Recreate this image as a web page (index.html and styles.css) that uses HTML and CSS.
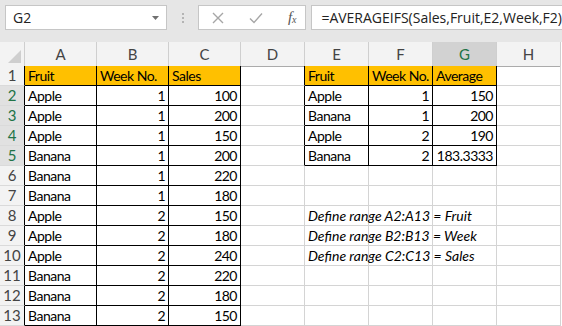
FILE: index.html
```html
<!DOCTYPE html>
<html lang="en">
<head>
    <meta charset="UTF-8">
    <meta name="viewport" content="width=device-width, initial-scale=1.0">
    <title>AVERAGEIFS</title>
    <link rel="stylesheet" href="styles.css">
</head>
<body>
    <div class="formula-bar">
        <div class="name-box">
            <span>G2</span>
            <svg class="drop" width="7" height="4" viewBox="0 0 7 4"><path d="M0 0h7L3.5 4z" fill="#707070"/></svg>
        </div>
        <div class="grip"><i></i><i></i><i></i></div>
        <div class="fx-box">
            <svg width="12" height="12" viewBox="0 0 12 12"><path d="M1 1l10 10M11 1L1 11" stroke="#a6a6a6" stroke-width="1.4" fill="none"/></svg>
            <svg width="14" height="12" viewBox="0 0 14 12"><path d="M1 6.5l4 4L13 1.5" stroke="#a6a6a6" stroke-width="1.4" fill="none"/></svg>
            <span class="fx">f<sub>x</sub></span>
        </div>
        <div class="formula-input">=AVERAGEIFS(Sales,Fruit,E2,Week,F2)</div>
    </div>

    <div class="sheet">
        <div class="row col-heads">
            <div class="corner"><svg width="13" height="13" viewBox="0 0 13 13"><path d="M13 0V13H0z" fill="#cfcfcf"/></svg></div>
            <div>A</div><div>B</div><div>C</div><div>D</div><div>E</div><div>F</div><div class="sel">G</div><div>H</div>
        </div>
        <div class="row">
            <div class="rh">1</div>
            <div class="c b hd">Fruit</div><div class="c b hd">Week No.</div><div class="c b hd">Sales</div>
            <div class="c bd"></div>
            <div class="c b hd">Fruit</div><div class="c b hd">Week No.</div><div class="c b hd">Average</div>
            <div class="c"></div>
        </div>
        <div class="row">
            <div class="rh on">2</div>
            <div class="c b">Apple</div><div class="c b n">1</div><div class="c b n">100</div>
            <div class="c bd"></div>
            <div class="c b">Apple</div><div class="c b n">1</div><div class="c b n">150</div>
            <div class="c"></div>
        </div>
        <div class="row">
            <div class="rh on">3</div>
            <div class="c b">Apple</div><div class="c b n">1</div><div class="c b n">200</div>
            <div class="c bd"></div>
            <div class="c b">Banana</div><div class="c b n">1</div><div class="c b n">200</div>
            <div class="c"></div>
        </div>
        <div class="row">
            <div class="rh on">4</div>
            <div class="c b">Apple</div><div class="c b n">1</div><div class="c b n">150</div>
            <div class="c bd"></div>
            <div class="c b">Apple</div><div class="c b n">2</div><div class="c b n">190</div>
            <div class="c"></div>
        </div>
        <div class="row">
            <div class="rh on">5</div>
            <div class="c b">Banana</div><div class="c b n">1</div><div class="c b n">200</div>
            <div class="c bd"></div>
            <div class="c b">Banana</div><div class="c b n">2</div><div class="c b n">183.3333</div>
            <div class="c"></div>
        </div>
        <div class="row">
            <div class="rh">6</div>
            <div class="c b">Banana</div><div class="c b n">1</div><div class="c b n">220</div>
            <div class="c"></div><div class="c"></div><div class="c"></div><div class="c"></div><div class="c"></div>
        </div>
        <div class="row">
            <div class="rh">7</div>
            <div class="c b">Banana</div><div class="c b n">1</div><div class="c b n">180</div>
            <div class="c"></div><div class="c"></div><div class="c"></div><div class="c"></div><div class="c"></div>
        </div>
        <div class="row">
            <div class="rh">8</div>
            <div class="c b">Apple</div><div class="c b n">2</div><div class="c b n">150</div>
            <div class="c"></div><div class="c note">Define range A2:A13 = Fruit</div><div class="c"></div><div class="c"></div><div class="c"></div>
        </div>
        <div class="row">
            <div class="rh">9</div>
            <div class="c b">Apple</div><div class="c b n">2</div><div class="c b n">180</div>
            <div class="c"></div><div class="c note">Define range B2:B13 = Week</div><div class="c"></div><div class="c"></div><div class="c"></div>
        </div>
        <div class="row">
            <div class="rh">10</div>
            <div class="c b">Apple</div><div class="c b n">2</div><div class="c b n">240</div>
            <div class="c"></div><div class="c note">Define range C2:C13 = Sales</div><div class="c"></div><div class="c"></div><div class="c"></div>
        </div>
        <div class="row">
            <div class="rh">11</div>
            <div class="c b">Banana</div><div class="c b n">2</div><div class="c b n">220</div>
            <div class="c"></div><div class="c"></div><div class="c"></div><div class="c"></div><div class="c"></div>
        </div>
        <div class="row">
            <div class="rh">12</div>
            <div class="c b">Banana</div><div class="c b n">2</div><div class="c b n">180</div>
            <div class="c"></div><div class="c"></div><div class="c"></div><div class="c"></div><div class="c"></div>
        </div>
        <div class="row">
            <div class="rh">13</div>
            <div class="c b">Banana</div><div class="c b n">2</div><div class="c b n">150</div>
            <div class="c"></div><div class="c"></div><div class="c"></div><div class="c"></div><div class="c"></div>
        </div>
    </div>
</body>
</html>
```

FILE: styles.css
```css
* { box-sizing: border-box; }
body { margin: 0; background: #fff; font-family: Lato, "Liberation Sans", sans-serif; color: #000; overflow: hidden; }

/* formula bar */
.formula-bar { display: flex; align-items: center; height: 42px; padding: 0 0 7px 5px; background: #e6e6e6; }
.name-box { display: flex; align-items: center; justify-content: space-between; width: 163px; height: 25px; padding: 0 7px 0 7px; background: #fff; border: 1px solid #c6c6c6; font-family: "Open Sans", sans-serif; font-size: 14px; color: #222; }
.drop { margin-top: 1px; }
.grip { display: flex; flex-direction: column; gap: 2px; width: 31px; align-items: center; }
.grip i { width: 2px; height: 2px; background: #b4b4b4; }
.fx-box { display: flex; align-items: center; gap: 25px; width: 109px; height: 25px; padding-left: 13px; background: #fff; border: 1px solid #c6c6c6; }
.fx { font-family: "Liberation Serif", serif; font-style: italic; font-size: 15px; color: #555; }
.fx sub { font-size: 10px; vertical-align: -1px; }
.formula-input { flex: 1; height: 25px; margin-left: 5px; padding-left: 9px; background: #fff; border: 1px solid #c6c6c6; border-right: 0; font-family: "Open Sans", sans-serif; font-size: 14px; line-height: 23px; color: #222; white-space: nowrap; }

/* grid */
.row { display: grid; grid-template-columns: 25px 72px 72px 72px 64px 64px 64px 64px 64px; height: 20px; }
.row > div { border-right: 1px solid #d4d4d4; border-bottom: 1px solid #d4d4d4; font-size: 14px; line-height: 18px; white-space: nowrap; }
.col-heads { height: 24px; }
.col-heads > div { background: #f3f3f3; color: #444; text-align: center; font-size: 15px; line-height: 24px; border-right-color: #cfcfcf; border-bottom-color: #ababab; }
.col-heads .sel { background: #d2d2d2; color: #217346; }
.corner { display: flex; align-items: flex-end; justify-content: flex-end; padding: 0 3px 3px 0; }
.rh { background: #f3f3f3; color: #444; text-align: center; font-size: 15px !important; border-right-color: #000 !important; border-bottom-color: #dadada !important; }
.rh.on { background: #e1e1e1; color: #217346; }
.c { padding: 1px 3px 0; letter-spacing: -0.5px; }
.n { text-align: right; padding-right: 3px; }
.b { border-right-color: #000 !important; border-bottom-color: #000 !important; }
.bd { border-right-color: #000 !important; }
.hd { background: #ffc000; }
.note { font-style: italic; letter-spacing: 0; position: relative; z-index: 1; }
```
